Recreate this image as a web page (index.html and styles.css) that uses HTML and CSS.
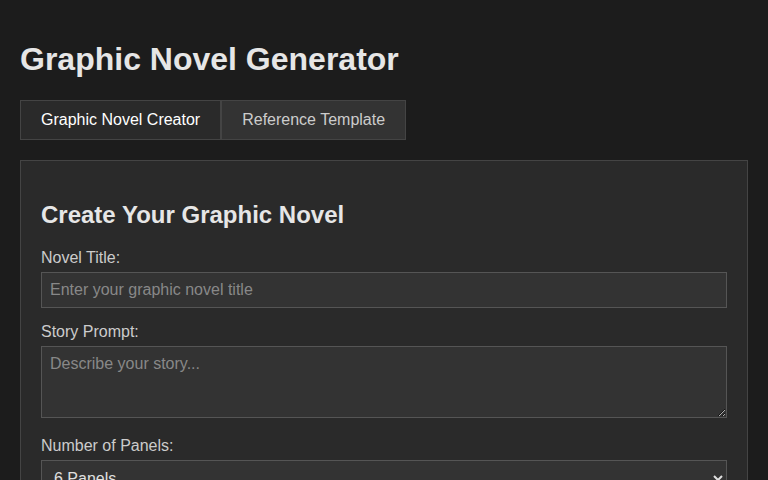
FILE: index.html
```html
<!DOCTYPE html>
<html lang="en">
<head>
<meta charset="utf-8">
<title>Graphic Novel Generator</title>
<link rel="stylesheet" href="styles.css">
</head>
<body>
  <h1 class="page-title">Graphic Novel Generator</h1>

  <div class="tabs">
    <button class="tab active" type="button">Graphic Novel Creator</button>
    <button class="tab" type="button">Reference Template</button>
  </div>

  <section class="panel">
    <h2 class="panel-title">Create Your Graphic Novel</h2>

    <div class="form-group">
      <label for="title">Novel Title:</label>
      <input id="title" type="text" placeholder="Enter your graphic novel title">
    </div>

    <div class="form-group form-group-text">
      <label for="prompt">Story Prompt:</label>
      <textarea id="prompt" placeholder="Describe your story..."></textarea>
    </div>

    <div class="form-group">
      <label for="panels">Number of Panels:</label>
      <select id="panels">
        <option>4 Panels</option>
        <option selected>6 Panels</option>
        <option>8 Panels</option>
      </select>
    </div>
  </section>
</body>
</html>
```

FILE: styles.css
```css
html, body {
  background: #1c1c1c;
}

body {
  margin: 0;
  padding: 20px;
  font-family: "Liberation Sans", Arial, sans-serif;
  color: #e0e0e0;
}

.page-title {
  font-size: 32px;
  margin: 21px 0 22px;
  color: #e6e6e6;
}

.tabs {
  display: flex;
  margin-bottom: 20px;
}

.tab {
  font-family: inherit;
  font-size: 16px;
  padding: 10px 20px;
  background: #333333;
  color: #cccccc;
  border: 1px solid #444444;
  cursor: pointer;
}

.tab.active {
  background: #2a2a2a;
  color: #ffffff;
}

.panel {
  background: #2a2a2a;
  border: 1px solid #444444;
  padding: 20px;
}

.panel-title {
  font-size: 24px;
  margin: 20px 0;
  color: #e6e6e6;
}

.form-group {
  margin-bottom: 15px;
}

.form-group-text {
  margin-bottom: 19px;
}

.form-group label {
  display: block;
  margin-bottom: 5px;
  color: #cccccc;
  font-size: 16px;
}

.form-group input,
.form-group textarea,
.form-group select {
  display: block;
  width: 100%;
  box-sizing: border-box;
  padding: 8px;
  font-family: inherit;
  font-size: 16px;
  background: #333333;
  color: #e0e0e0;
  border: 1px solid #555555;
  border-radius: 0;
}

.form-group textarea {
  height: 72px;
  resize: vertical;
}

::placeholder {
  color: #888888;
}
```
